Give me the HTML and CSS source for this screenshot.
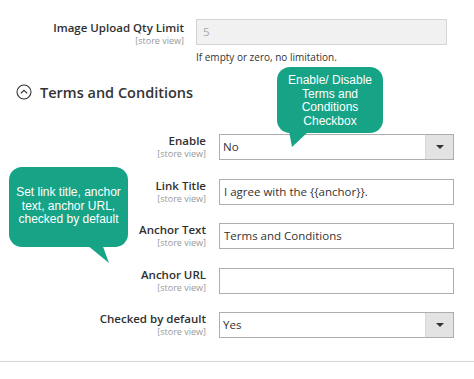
FILE: index.html
```html
<!DOCTYPE html>
<html lang="en">
<head>
    <meta charset="UTF-8">
    <title>Terms and Conditions</title>
    <link rel="stylesheet" href="styles.css">
</head>
<body>
    <div class="page">
        <div class="field field-top">
            <div class="label">
                <span class="name">Image Upload Qty Limit</span>
                <span class="scope">[store view]</span>
            </div>
            <div class="control">
                <div class="input disabled">5</div>
                <div class="note">If empty or zero, no limitation.</div>
            </div>
        </div>

        <div class="section-title">
            <svg class="toggle" width="16" height="16" viewBox="0 0 16 16">
                <circle cx="8" cy="8" r="7" fill="none" stroke="#333" stroke-width="1.1"/>
                <path d="M4.8 9.4 L8 6.3 L11.2 9.4" fill="none" stroke="#333" stroke-width="1.1"/>
            </svg>
            <span>Terms and Conditions</span>
        </div>

        <div class="fields">
            <div class="field">
                <div class="label">
                    <span class="name">Enable</span>
                    <span class="scope">[store view]</span>
                </div>
                <div class="control">
                    <div class="input select">No<span class="arrow"></span></div>
                </div>
            </div>
            <div class="field">
                <div class="label">
                    <span class="name">Link Title</span>
                    <span class="scope">[store view]</span>
                </div>
                <div class="control">
                    <div class="input">I agree with the {{anchor}}.</div>
                </div>
            </div>
            <div class="field">
                <div class="label">
                    <span class="name">Anchor Text</span>
                    <span class="scope">[store view]</span>
                </div>
                <div class="control">
                    <div class="input">Terms and Conditions</div>
                </div>
            </div>
            <div class="field">
                <div class="label">
                    <span class="name">Anchor URL</span>
                    <span class="scope">[store view]</span>
                </div>
                <div class="control">
                    <div class="input"></div>
                </div>
            </div>
            <div class="field">
                <div class="label">
                    <span class="name">Checked by default</span>
                    <span class="scope">[store view]</span>
                </div>
                <div class="control">
                    <div class="input select">Yes<span class="arrow"></span></div>
                </div>
            </div>
        </div>

        <div class="divider"></div>

        <!-- callouts -->
        <div class="bubble bubble-enable">
            Enable/ Disable<br>Terms and<br>Conditions<br>Checkbox
            <span class="tail"></span>
        </div>
        <div class="bubble bubble-link">
            Set link title, anchor<br>text, anchor URL,<br>checked by default
            <span class="tail"></span>
        </div>
    </div>
</body>
</html>
```

FILE: styles.css
```css
* {
    box-sizing: border-box;
    margin: 0;
    padding: 0;
}

body {
    font-family: "Open Sans", "Liberation Sans", sans-serif;
    background: #fff;
    color: #333;
}

.page {
    position: relative;
    width: 474px;
    height: 379px;
    overflow: hidden;
    padding-top: 19px;
}

.field {
    display: grid;
    grid-template-columns: 206px 235px;
    column-gap: 13px;
}

.field-top {
    grid-template-columns: 184px 251px;
    column-gap: 12px;
}

.label {
    display: flex;
    flex-direction: column;
    align-items: flex-end;
}

.field-top .label {
    padding-top: 1.5px;
}

.name {
    font-size: 11.5px;
    font-weight: 600;
    line-height: 14px;
    color: #303030;
}

.scope {
    font-size: 9px;
    line-height: 12px;
    color: #999;
}

.input {
    position: relative;
    height: 26px;
    border: 1px solid #adadad;
    font-size: 11.5px;
    line-height: 24px;
    padding-left: 4px;
    color: #333;
    background: #fff;
}

.input.disabled {
    background: #f1f1f1;
    border-color: #d4d4d4;
    color: #aaa;
    padding-left: 6px;
}

.note {
    font-size: 10px;
    line-height: 14px;
    margin-top: 5px;
    color: #333;
}

.select {
    padding-left: 3px;
}

.arrow {
    position: absolute;
    top: 0;
    right: 0;
    width: 28px;
    height: 24px;
    background: #e3e3e3;
    border-left: 1px solid #d8d8d8;
}

.arrow::after {
    content: "";
    position: absolute;
    left: 10px;
    top: 10px;
    border-left: 4px solid transparent;
    border-right: 4px solid transparent;
    border-top: 4px solid #333;
}

.section-title {
    display: flex;
    align-items: center;
    gap: 8px;
    height: 20px;
    margin: 18px 0 0 16px;
    font-size: 14.5px;
    font-weight: 600;
    color: #333;
}

.fields {
    display: flex;
    flex-direction: column;
    gap: 18.5px;
    margin-top: 32px;
}

.divider {
    margin-top: 23px;
    border-top: 1px solid #d6d6d6;
}

.bubble {
    position: absolute;
    background: #16a386;
    color: #fff;
    font-family: "Liberation Sans", Arial, sans-serif;
    font-size: 12px;
    line-height: 13.5px;
    text-align: center;
    border-radius: 13px;
}

.bubble .tail {
    position: absolute;
    background: #16a386;
}

.bubble-enable {
    left: 277px;
    top: 67px;
    width: 106px;
    height: 66px;
    padding-top: 7px;
}

.bubble-enable .tail {
    left: 12px;
    top: 64px;
    width: 20px;
    height: 16px;
    clip-path: polygon(0 0, 100% 0, 15% 100%);
}

.bubble-link {
    left: 9px;
    top: 167px;
    width: 119px;
    height: 80px;
    padding-top: 19px;
}

.bubble-link .tail {
    left: 78px;
    top: 78px;
    width: 22px;
    height: 18px;
    clip-path: polygon(0 0, 70% 0, 100% 100%);
}
```
